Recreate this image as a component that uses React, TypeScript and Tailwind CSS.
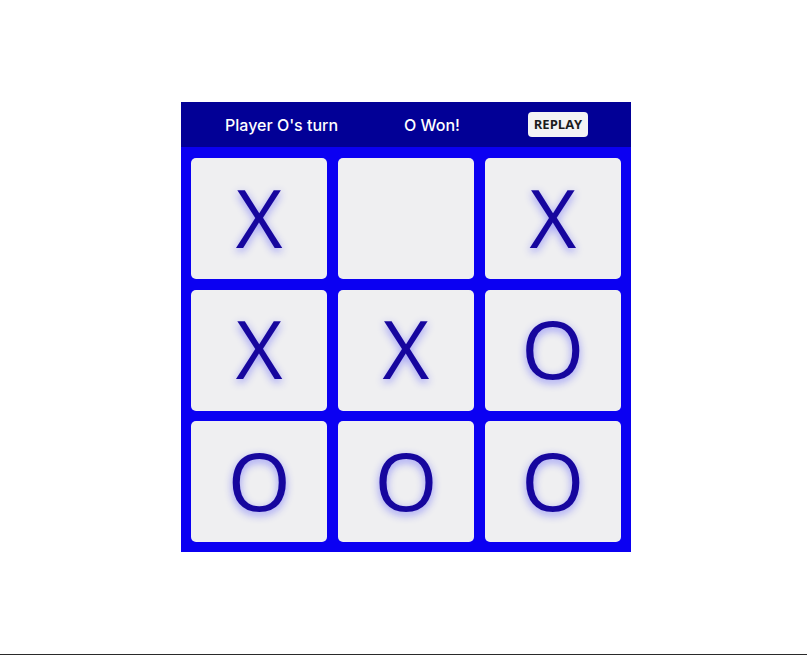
import React from "react";

const cells = ["X", "", "X", "X", "X", "O", "O", "O", "O"];

export default function App() {
  return (
    <div className="relative h-[655px] w-[807px] bg-white">
      <div className="absolute left-[181px] top-[102px] w-[450px]">
        <div
          className="flex h-[45px] items-center gap-[66px] bg-[#020096] pl-[44px] text-[16px] font-medium text-white"
          style={{ fontFamily: "Inter, 'Noto Sans', sans-serif" }}
        >
          <span className="w-[113px] whitespace-nowrap">Player O's turn</span>
          <span className="w-[58px] whitespace-nowrap">O Won!</span>
          <button
            className="h-[25px] w-[60px] rounded-[4px] bg-[#f3f3f4] text-[13px] font-bold text-[#1c1c1c]"
            style={{ fontFamily: "'Open Sans', 'DejaVu Sans', sans-serif" }}
          >
            REPLAY
          </button>
        </div>
        <div className="grid grid-cols-3 gap-x-[10.5px] gap-y-[10.5px] bg-[#0b00f2] px-[10px] pb-[10px] pt-[11px]">
          {cells.map((c, i) => (
            <div
              key={i}
              className="flex h-[121px] items-center justify-center rounded-[5px] bg-[#efeff1] pb-[4px] text-[81px] font-medium text-[#16069e]"
              style={{
                fontFamily: "'Open Sans', 'Noto Sans', sans-serif",
                textShadow: "0 3px 8px rgba(40,40,255,0.45)",
              }}
            >
              {c}
            </div>
          ))}
        </div>
      </div>
      <div className="absolute bottom-0 left-0 h-px w-full bg-[#2a2a2a]" />
    </div>
  );
}
